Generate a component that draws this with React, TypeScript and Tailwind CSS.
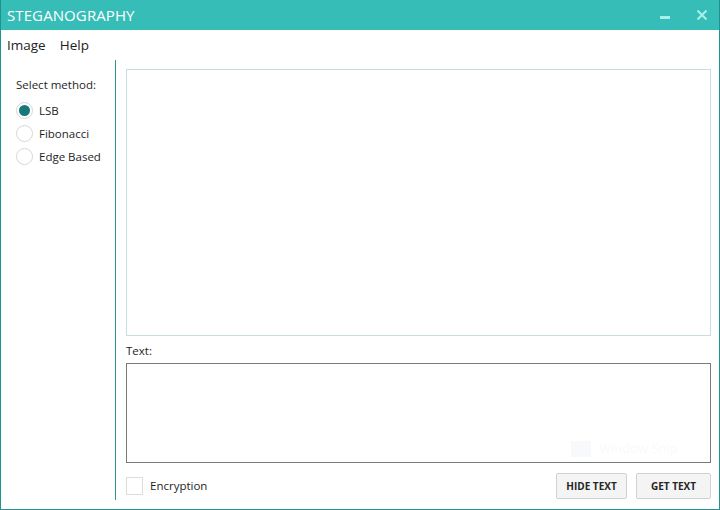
import { useState } from 'react';

const METHODS = ['LSB', 'Fibonacci', 'Edge Based'];

function Radio({ label, checked, onSelect }: { label: string; checked: boolean; onSelect: () => void }) {
  return (
    <label className="flex items-center gap-[6px] h-[23px] cursor-pointer" onClick={onSelect}>
      <span className="w-[17px] h-[17px] rounded-full border border-[#d6d6d6] bg-white flex items-center justify-center">
        {checked && <span className="w-[11px] h-[11px] rounded-full bg-[#17777a]" />}
      </span>
      <span className="text-[11.5px] text-[#1e1e1e]">{label}</span>
    </label>
  );
}

export default function App() {
  const [method, setMethod] = useState('LSB');
  const [encrypt, setEncrypt] = useState(false);

  return (
    <div
      className="w-[720px] h-[510px] flex flex-col bg-white border border-[#23928f] border-t-0 overflow-hidden"
      style={{ fontFamily: '"Open Sans", "Noto Sans", sans-serif' }}
    >
      {/* title bar */}
      <div className="h-[30px] shrink-0 bg-[#36bdb8] flex items-center justify-between pl-[7px] pr-[10px] -mx-px">
        <span className="text-[15px] text-white tracking-[0.1px]">STEGANOGRAPHY</span>
        <div className="flex items-center gap-[26px]">
          <span className="block w-[10px] h-[3px] bg-[#a9f0ea] mt-[4px]" />
          <svg width="12" height="12" viewBox="0 0 12 12" className="mr-[2px]">
            <path d="M1.5 1.5 L10.5 10.5 M10.5 1.5 L1.5 10.5" stroke="#a9f0ea" strokeWidth="2" />
          </svg>
        </div>
      </div>

      {/* menu */}
      <div className="h-[30px] shrink-0 flex items-center gap-[14px] pl-[6px] text-[13.5px] text-[#1e1e1e]">
        <span>Image</span>
        <span>Help</span>
      </div>

      <div className="flex flex-1 min-h-0 pb-[9px]">
        {/* left panel */}
        <div className="w-[115px] shrink-0 border-r border-[#2a9592] pl-[15px] pt-[16px]">
          <div className="text-[11.5px] text-[#1e1e1e] mb-[6px]">Select method:</div>
          <div className="flex flex-col">
            {METHODS.map((m) => (
              <Radio key={m} label={m} checked={method === m} onSelect={() => setMethod(m)} />
            ))}
          </div>
        </div>

        {/* main area */}
        <div className="flex-1 flex flex-col pl-[10px] pr-[8px] pt-[9px]">
          <div className="h-[267px] border border-[#c6dedd] bg-white" />
          <div className="text-[11.5px] text-[#1e1e1e] mt-[7px] mb-[4px] leading-[16px]">Text:</div>
          <div className="h-[100px] border border-[#7a7a7a] bg-white relative">
            <div className="absolute left-[444px] top-[75px] flex items-center gap-[8px] opacity-[0.03]">
              <span className="w-[20px] h-[16px] bg-[#3a6fa0]" />
              <span className="text-[13px] text-[#3a6fa0]">Window Snip</span>
            </div>
          </div>
          <div className="flex items-center justify-between mt-[10px]">
            <label className="flex items-center gap-[7px] cursor-pointer" onClick={() => setEncrypt(!encrypt)}>
              <span className="w-[17px] h-[18px] border border-[#dcdcdc] bg-white flex items-center justify-center text-[11px] text-[#17777a]">
                {encrypt ? '✓' : ''}
              </span>
              <span className="text-[11.5px] text-[#1e1e1e]">Encryption</span>
            </label>
            <div className="flex gap-[9px]">
              <button className="w-[71px] h-[26px] rounded-[2px] border border-[#d2d2d2] bg-[#f4f4f4] text-[10px] font-bold text-[#262626]">
                HIDE TEXT
              </button>
              <button className="w-[75px] h-[26px] rounded-[2px] border border-[#d2d2d2] bg-[#f4f4f4] text-[10px] font-bold text-[#262626]">
                GET TEXT
              </button>
            </div>
          </div>
        </div>
      </div>
    </div>
  );
}
